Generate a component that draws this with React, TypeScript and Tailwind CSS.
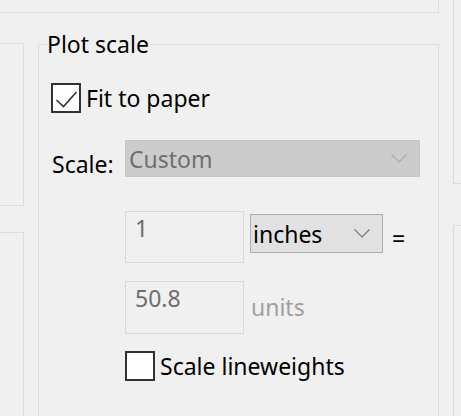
import React from "react";

const font = { fontFamily: '"Noto Sans", "Open Sans", sans-serif' };

function Checkbox({ checked }: { checked?: boolean }) {
  return (
    <div className="w-[30px] h-[30px] border-2 border-[#333333] bg-white shrink-0 flex items-center justify-center">
      {checked ? (
        <svg width="26" height="26" viewBox="0 0 26 26" className="block">
          <path d="M3.5 15 L10.5 21.5 L23.5 7" fill="none" stroke="#333333" strokeWidth="1.6" />
        </svg>
      ) : null}
    </div>
  );
}

function Chevron({ color }: { color: string }) {
  return (
    <svg width="16" height="9" viewBox="0 0 16 9" className="block">
      <path d="M0.5 0.5 L8 8 L15.5 0.5" fill="none" stroke={color} strokeWidth="1.2" />
    </svg>
  );
}

export default function App() {
  return (
    <div
      className="w-[461px] h-[416px] bg-[#f0f0f0] overflow-hidden flex text-[23px] leading-[32px] text-black"
      style={font}
    >
      {/* Column A */}
      <div className="w-[439px] shrink-0 flex flex-col">
        <div className="h-[13px] shrink-0 border-b border-r border-[#dcdcdc]" />
        <div className="flex shrink-0">
          {/* left panels */}
          <div className="w-[24px] shrink-0 flex flex-col">
            <div className="mt-[30px] h-[163px] shrink-0 border-t border-r border-b border-[#dcdcdc]" />
            <div className="mt-[26px] h-[300px] shrink-0 border-t border-r border-[#dcdcdc]" />
          </div>
          {/* group box */}
          <div className="relative ml-[14px] mt-[31px] w-[401px] h-[420px] shrink-0 border border-[#dcdcdc]">
            <span className="absolute left-[8px] top-[-17px] bg-[#f0f0f0] pr-[2px] whitespace-nowrap">
              Plot scale
            </span>
            <div className="flex flex-col">
              {/* Fit to paper */}
              <div className="mt-[38px] ml-[12px] h-[30px] flex items-center gap-[5px]">
                <Checkbox checked />
                <span className="whitespace-nowrap">Fit to paper</span>
              </div>
              {/* Scale row */}
              <div className="mt-[27px] ml-[13px] h-[37px] flex items-start">
                <span className="w-[73px] pt-[8px] whitespace-nowrap">Scale:</span>
                <div className="w-[295px] h-[37px] bg-[#cccccc] border border-[#c6c6c6] flex items-center justify-between pl-[3px] pr-[12px]">
                  <span className="text-[#6f6f6f]">Custom</span>
                  <Chevron color="#a9a9a9" />
                </div>
              </div>
              {/* 1 inches = */}
              <div className="mt-[34px] ml-[86px] h-[52px] flex items-start">
                <div className="w-[119px] h-[52px] border border-[#d9d9d9] pl-[9px] text-[#6d6d6d]">1</div>
                <div className="ml-[6px] mt-[3px] w-[133px] h-[39px] bg-[#e1e1e1] border border-[#adadad] flex items-center justify-between pl-[2px] pr-[12px]">
                  <span>inches</span>
                  <Chevron color="#777777" />
                </div>
                <span className="ml-[9px] mt-[11px]">=</span>
              </div>
              {/* 50.8 units */}
              <div className="mt-[18px] ml-[86px] h-[53px] flex items-start">
                <div className="w-[119px] h-[53px] border border-[#d9d9d9] pl-[9px] text-[#6d6d6d]">50.8</div>
                <span className="ml-[7px] mt-[10px] text-[#a0a0a0]">units</span>
              </div>
              {/* Scale lineweights */}
              <div className="mt-[17px] ml-[86px] h-[30px] flex items-center gap-[5px]">
                <Checkbox />
                <span className="whitespace-nowrap">Scale lineweights</span>
              </div>
            </div>
          </div>
        </div>
      </div>
      {/* Column B */}
      <div className="ml-[14px] flex-1 flex flex-col">
        <div className="h-[184px] shrink-0 border-l border-b border-[#dcdcdc]" />
        <div className="mt-[41px] h-[300px] shrink-0 border-l border-t border-[#dcdcdc]" />
      </div>
    </div>
  );
}
